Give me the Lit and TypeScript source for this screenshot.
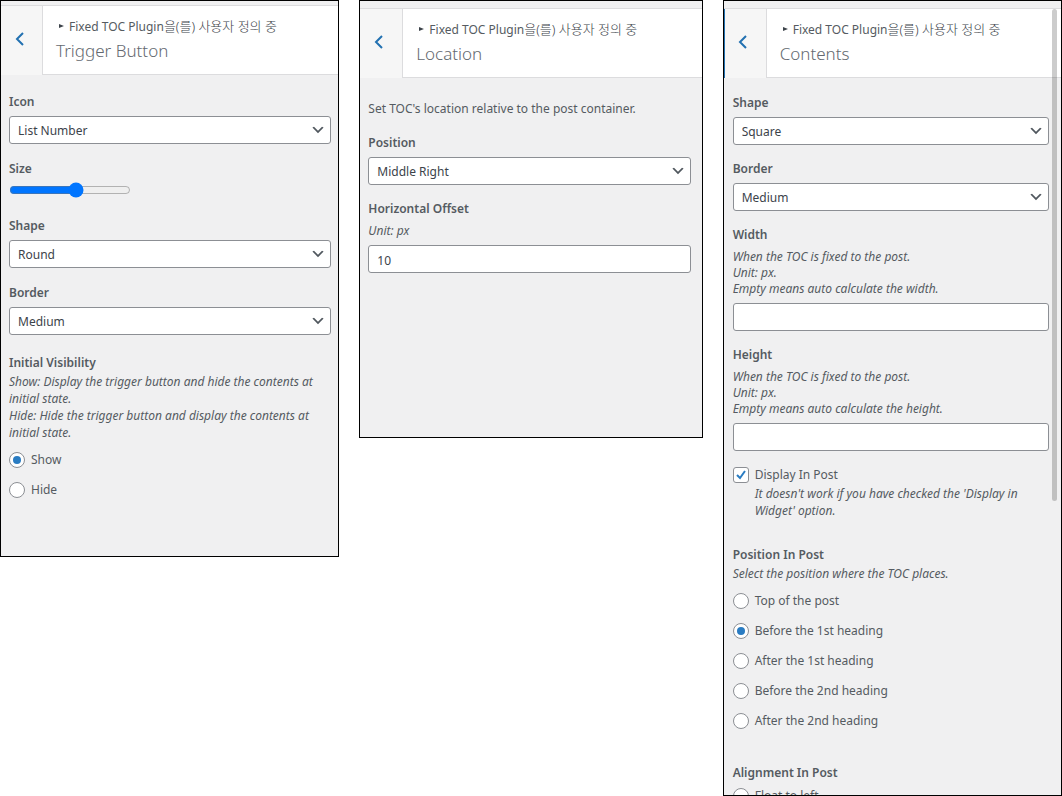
import { LitElement, html, css, nothing, TemplateResult } from "lit";
import { customElement } from "lit/decorators.js";
import { classMap } from "lit/directives/class-map.js";

const dropdown = (id: string, label: string, value: string, options: string[]) => html`
  <div class="control">
    <label class="title" for=${id}>${label}</label>
    <div class="select-wrap">
      <select id=${id} class="field">
        ${options.map((o) => html`<option ?selected=${o === value}>${o}</option>`)}
      </select>
      <svg class="chevron" viewBox="0 0 20 20" aria-hidden="true">
        <path d="M5 6l5 5 5-5 2 1-7 7-7-7 2-1z" />
      </svg>
    </div>
  </div>
`;

const textbox = (id: string, label: string, lines: string[], value = "") => html`
  <div class="control">
    <label class="title" for=${id}>${label}</label>
    <div class="note spaced" id="${id}-note">${lines.map((l) => html`<div>${l}</div>`)}</div>
    <input class="field text" id=${id} type="text" .value=${value} aria-describedby="${id}-note" />
  </div>
`;

const radios = (name: string, label: string, lines: string[], options: string[], checked = -1) => html`
  <fieldset class="control group">
    <legend class="title">${label}</legend>
    ${lines.length
      ? html`<div class="note">${lines.map((l) => html`<div>${l}</div>`)}</div>`
      : nothing}
    <div class=${classMap({ choices: true, tight: !lines.length })}>
      ${options.map(
        (o, i) => html`
          <label class="choice">
            <input type="radio" name=${name} ?checked=${i === checked} />
            <span>${o}</span>
          </label>
        `
      )}
    </div>
  </fieldset>
`;

const header = (title: string) => html`
  <header class="header">
    <button class="back" type="button" aria-label="Back">
      <svg viewBox="0 0 10 14" aria-hidden="true">
        <path d="M8 1L2 7l6 6" />
      </svg>
    </button>
    <div class="heading">
      <div class="crumb">
        <svg class="arrow" viewBox="0 0 5 6" aria-hidden="true"><path d="M0 1l5 2-5 2z" /></svg>
        <span>Fixed TOC Plugin<span class="hangul" lang="ko">을(를) 사용자 정의 중</span></span>
      </div>
      <h2>${title}</h2>
    </div>
  </header>
`;

const panel = (kind: string, title: string, body: TemplateResult) => html`
  <section class="panel ${kind}">
    ${header(title)}
    <div class="body">${body}</div>
  </section>
`;

const shapes = ["Square", "Round"];
const borders = ["Thin", "Medium", "Bold"];

@customElement("app-root")
export class AppRoot extends LitElement {
  static styles = css`
    :host {
      display: grid;
      grid-template-columns: 339fr 343fr 339fr;
      column-gap: 20px;
      align-items: start;
      height: 100vh;
      overflow: hidden;
      background: #fff;
      color: #555b61;
      font: 12px/20px "Noto Sans", "Noto Sans CJK KR", sans-serif;
    }
    * {
      box-sizing: border-box;
    }
    .panel {
      position: relative;
      min-width: 0;
      background: #f0f0f1;
      border: 1px solid #000;
    }
    .trigger {
      padding-top: 4px;
    }
    .location,
    .contents {
      padding-top: 7px;
    }
    .contents {
      height: 100vh;
      overflow: hidden;
    }
    .header {
      display: flex;
      height: 70px;
      border-top: 1px solid #dcdcde;
    }
    .back {
      flex: none;
      width: 42px;
      padding: 0 4px 4px 0;
      border: 0;
      background: #f6f6f6;
      display: grid;
      place-items: center;
      cursor: pointer;
    }
    .trigger .back {
      width: 41px;
    }
    .contents .back {
      border-left: 1px solid #2271b1;
    }
    .back svg {
      width: 10px;
      height: 14px;
      fill: none;
      stroke: #2271b1;
      stroke-width: 2;
    }
    .heading {
      flex: 1;
      padding: 10px 13px 0;
      background: #fff;
      border-left: 1px solid #dcdcde;
      border-bottom: 1px solid #dcdcde;
    }
    .crumb {
      display: flex;
      align-items: center;
      gap: 5px;
      padding-left: 3px;
      height: 20px;
      white-space: nowrap;
    }
    .hangul {
      font-size: 13px;
      font-weight: 300;
      color: #3c434a;
    }
    .arrow {
      width: 5px;
      height: 6px;
      fill: #3c434a;
    }
    h2 {
      margin: 3px 0 0;
      font-size: 17px;
      line-height: 24px;
      font-weight: 300;
      color: #646970;
    }
    .body {
      display: flex;
      flex-direction: column;
      gap: 14px;
      padding: 17px 8px 50px;
    }
    .trigger .body {
      gap: 15px;
      padding-right: 7px;
    }
    .location .body {
      padding: 21px 11px 164px 8px;
    }
    .contents .body {
      padding: 15px 12px 0 9px;
    }
    .control {
      min-width: 0;
    }
    .title {
      display: block;
      padding: 0;
      font-size: 12px;
      line-height: 20px;
      font-weight: 600;
    }
    .select-wrap {
      display: grid;
      margin-top: 4px;
    }
    .field {
      width: 100%;
      height: 28px;
      margin: 0;
      padding: 2px 8px 0;
      border: 1px solid #8c8f94;
      border-radius: 3px;
      background: #fff;
      color: #3c434a;
      font: inherit;
      appearance: none;
    }
    .select-wrap > * {
      grid-area: 1 / 1;
    }
    .chevron {
      width: 16px;
      height: 16px;
      place-self: center end;
      margin-right: 5px;
      fill: #50575e;
      pointer-events: none;
    }
    .text {
      display: block;
    }
    .slider {
      display: block;
      width: 122px;
      height: 16px;
      margin: 3px 0;
    }
    .note {
      font-size: 12px;
      line-height: 17px;
      font-style: italic;
    }
    .spaced {
      margin: 4px 0 6px;
      line-height: 16px;
    }
    .intro {
      margin: 0;
    }
    .group {
      margin: 0;
      padding: 0;
      border: 0;
    }
    .trigger .group {
      margin-top: 3px;
    }
    .contents .group {
      margin-top: 12px;
    }
    .choices {
      display: flex;
      flex-direction: column;
      gap: 10px;
      padding: 9px 0 6px;
    }
    .tight {
      padding-top: 3px;
    }
    .choice {
      display: flex;
      align-items: center;
      gap: 6px;
    }
    .choice input {
      flex: none;
      width: 16px;
      height: 16px;
      margin: 0;
      border: 1px solid #8c8f94;
      background: #fff;
      appearance: none;
      display: grid;
      place-items: center;
    }
    .choice input[type="radio"] {
      border-radius: 50%;
    }
    .choice input[type="radio"]:checked::before {
      content: "";
      width: 8px;
      height: 8px;
      border-radius: 50%;
      background: #2a7cc2;
    }
    .tick {
      display: grid;
      flex: none;
    }
    .tick > * {
      grid-area: 1 / 1;
    }
    .tick input {
      border-radius: 3px;
    }
    .tick svg {
      width: 16px;
      height: 16px;
      fill: none;
      stroke: #2a7cc2;
      stroke-width: 2;
      pointer-events: none;
    }
    .indented {
      margin-left: 22px;
    }
    .thumb {
      position: absolute;
      top: 8px;
      right: 4px;
      width: 5px;
      height: 62%;
      border-radius: 3px;
      background: rgba(0, 0, 0, 0.2);
    }
  `;

  render() {
    return html`
      ${panel(
        "trigger",
        "Trigger Button",
        html`
          ${dropdown("icon", "Icon", "List Number", ["List Number", "List", "Menu"])}
          <div class="control">
            <label class="title" for="size">Size</label>
            <input class="slider" id="size" type="range" min="0" max="100" value="56" />
          </div>
          ${dropdown("trigger-shape", "Shape", "Round", shapes)}
          ${dropdown("trigger-border", "Border", "Medium", borders)}
          ${radios(
            "visibility",
            "Initial Visibility",
            [
              "Show: Display the trigger button and hide the contents at initial state.",
              "Hide: Hide the trigger button and display the contents at initial state.",
            ],
            ["Show", "Hide"],
            0
          )}
        `
      )}
      ${panel(
        "location",
        "Location",
        html`
          <p class="intro">Set TOC's location relative to the post container.</p>
          ${dropdown("position", "Position", "Middle Right", ["Middle Right", "Middle Left"])}
          ${textbox("offset", "Horizontal Offset", ["Unit: px"], "10")}
        `
      )}
      ${panel(
        "contents",
        "Contents",
        html`
          ${dropdown("contents-shape", "Shape", "Square", shapes)}
          ${dropdown("contents-border", "Border", "Medium", borders)}
          ${textbox("width", "Width", [
            "When the TOC is fixed to the post.",
            "Unit: px.",
            "Empty means auto calculate the width.",
          ])}
          ${textbox("height", "Height", [
            "When the TOC is fixed to the post.",
            "Unit: px.",
            "Empty means auto calculate the height.",
          ])}
          <div class="control">
            <label class="choice">
              <span class="tick">
                <input type="checkbox" checked />
                <svg viewBox="0 0 16 16" aria-hidden="true"><path d="M4 8l3 3 5-7" /></svg>
              </span>
              <span>Display In Post</span>
            </label>
            <div class="note indented">
              It doesn't work if you have checked the 'Display in Widget' option.
            </div>
          </div>
          ${radios(
            "post-position",
            "Position In Post",
            ["Select the position where the TOC places."],
            [
              "Top of the post",
              "Before the 1st heading",
              "After the 1st heading",
              "Before the 2nd heading",
              "After the 2nd heading",
            ],
            1
          )}
          ${radios("alignment", "Alignment In Post", [], ["Float to left", "Float to right"])}
          <div class="thumb"></div>
        `
      )}
    `;
  }
}
